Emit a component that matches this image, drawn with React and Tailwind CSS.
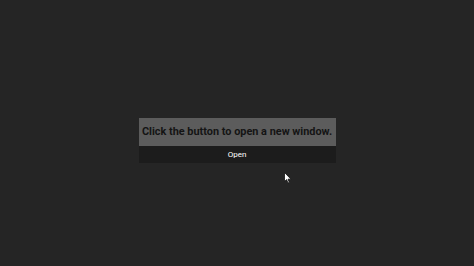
import React from "react";

const App = () => {
  return (
    <div className="relative h-[266px] w-[474px] bg-[#252525] flex flex-col items-center pt-[118px] font-['Roboto',sans-serif]">
      <div className="w-[197px] flex flex-col">
        <div className="h-[28px] bg-[#5c5c5c] flex items-center justify-center pt-[1px]">
          <span className="text-[10.9px] font-bold text-[#141414] whitespace-nowrap">
            Click the button to open a new window.
          </span>
        </div>
        <button className="h-[17px] bg-[#1c1c1c] text-white text-[8px] flex items-center justify-center">
          Open
        </button>
      </div>
      {/* mouse pointer */}
      <svg className="absolute left-[284px] top-[172px]" width="8" height="12" viewBox="0 0 8 12">
        <path d="M0.5 0.5 L0.5 9.5 L2.6 7.6 L4 11 L5.4 10.4 L4 7.2 L7 7.2 Z" fill="#fff" stroke="#111" strokeWidth="0.8" />
      </svg>
    </div>
  );
};

export default App;
